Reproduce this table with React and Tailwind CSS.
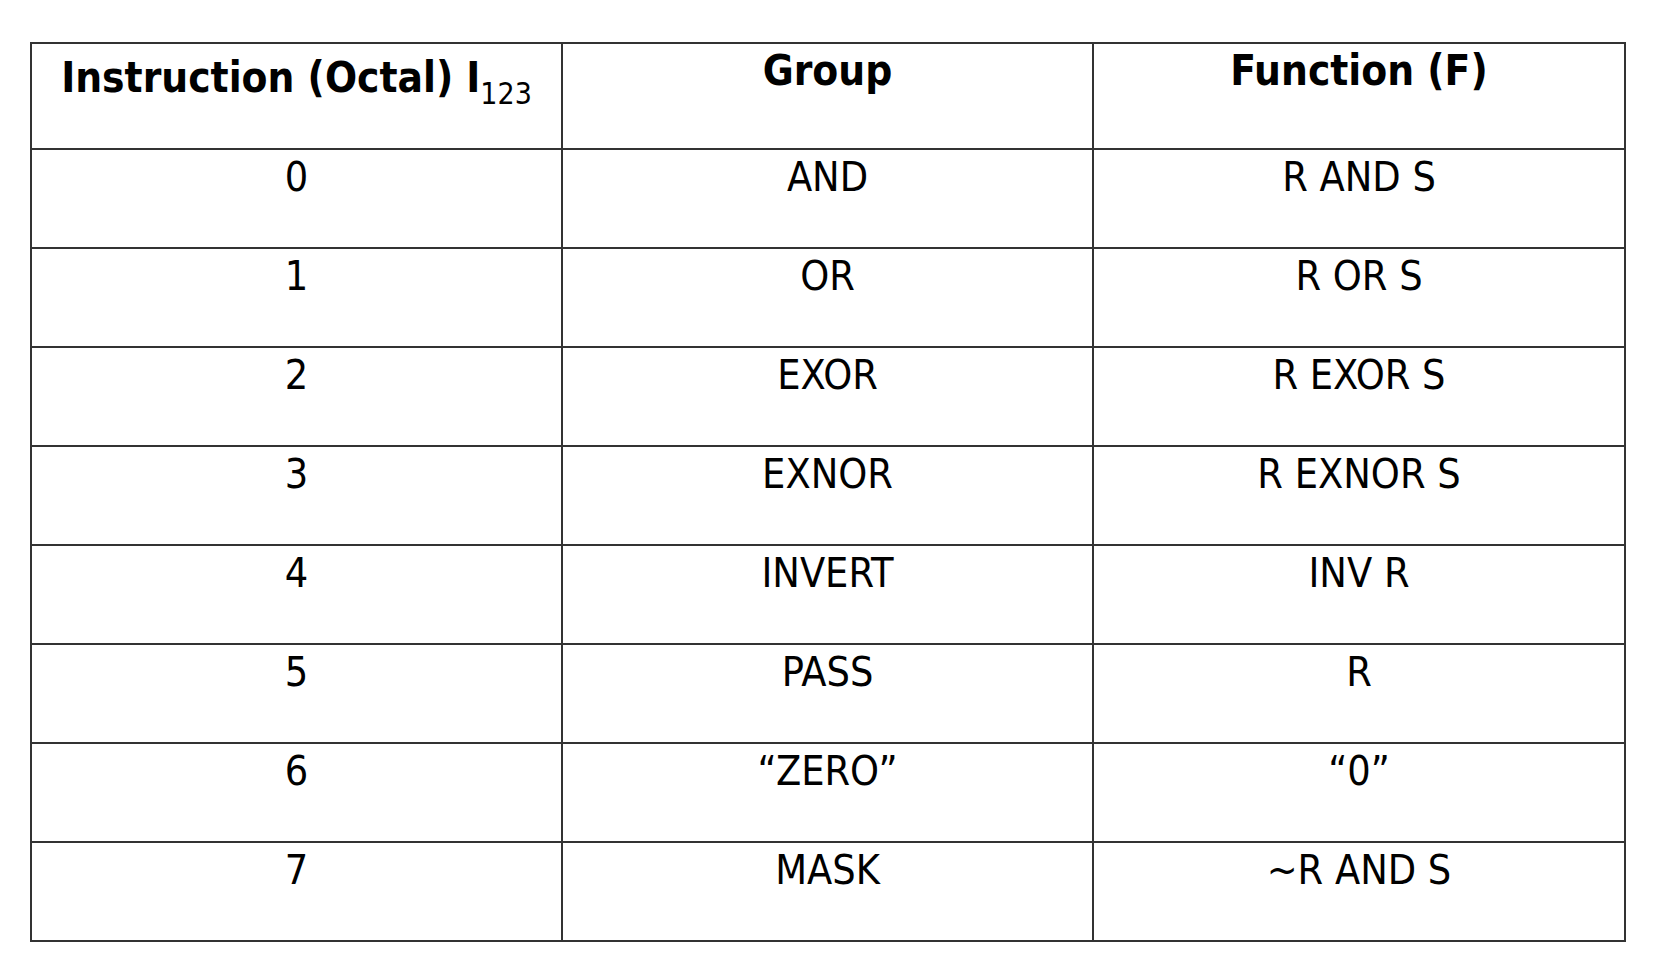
import React from 'react';

const rows = [
  ['0', 'AND', 'R AND S'],
  ['1', 'OR', 'R OR S'],
  ['2', 'EXOR', 'R EXOR S'],
  ['3', 'EXNOR', 'R EXNOR S'],
  ['4', 'INVERT', 'INV R'],
  ['5', 'PASS', 'R'],
  ['6', '\u201cZERO\u201d', '\u201c0\u201d'],
  ['7', 'MASK', '~R AND S'],
];

function App() {
  return (
    <div className="min-h-screen bg-white pt-[42px] pl-[30px] text-black [font-family:'DejaVu_Sans_Condensed','DejaVu_Sans',sans-serif] [font-stretch:condensed]">
      <table className="border-collapse border-2 border-[#222] table-fixed w-[1594px]">
        <thead>
          <tr className="h-[106px]">
            <th className="w-[531px] border-2 border-[#333] align-top pt-[14px] text-[42px] font-bold leading-[40px]">
              Instruction (Octal) I<sub className="text-[30px] font-normal align-[-4px]">123</sub>
            </th>
            <th className="w-[531px] border-2 border-[#333] align-top pt-[7px] text-[42px] font-bold leading-[40px]">
              Group
            </th>
            <th className="w-[532px] border-2 border-[#333] align-top pt-[7px] text-[42px] font-bold leading-[40px]">
              Function (F)
            </th>
          </tr>
        </thead>
        <tbody>
          {rows.map((r) => (
            <tr key={r[0]} className="h-[99px]">
              {r.map((c, i) => (
                <td key={i} className="border-2 border-[#333] align-top text-center pt-[12px] text-[41px] leading-[30px]">
                  {c}
                </td>
              ))}
            </tr>
          ))}
        </tbody>
      </table>
    </div>
  );
}

export default App;
